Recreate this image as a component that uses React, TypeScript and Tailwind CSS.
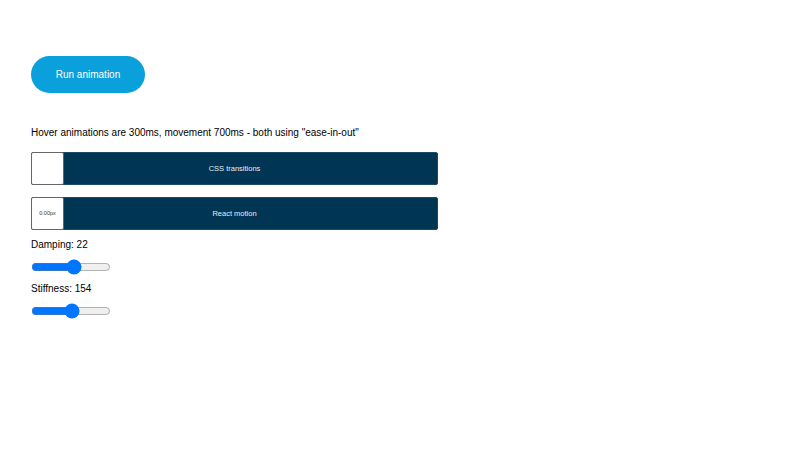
import React, { useState } from 'react';

const Bar: React.FC<{ label: string; box?: string }> = ({ label, box }) => (
  <div className="relative h-[33px] w-[407px] rounded-[2px] border border-[#1d4a66] bg-[#003554] flex items-center justify-center">
    <span className="text-[7.5px] text-[#e6eef3]">{label}</span>
    <div className="absolute left-[-1px] top-[-1px] h-[33px] w-[33px] rounded-[2px] border border-[#666] bg-white flex items-center justify-center">
      {box && <span className="text-[5.5px] text-[#333]">{box}</span>}
    </div>
  </div>
);

export default function App() {
  const [damping, setDamping] = useState(22);
  const [stiffness, setStiffness] = useState(154);

  return (
    <div
      className="min-h-screen bg-white pl-[31px] pt-[56px] text-black"
      style={{ fontFamily: '"Liberation Sans", Arial, sans-serif' }}
    >
      <button className="h-[37px] w-[114px] rounded-full bg-[#0aa0dc] text-[10px] text-white">
        Run animation
      </button>

      <p className="mt-[33px] text-[10px] leading-[14px]">
        Hover animations are 300ms, movement 700ms - both using "ease-in-out"
      </p>

      <div className="mt-[12px] flex flex-col gap-[12px]">
        <Bar label="CSS transitions" />
        <Bar label="React motion" box="0.00px" />
      </div>

      <div className="mt-[8px] text-[10px] leading-[14px]">Damping: {damping}</div>
      <input
        type="range"
        min={0}
        max={40}
        value={damping}
        onChange={(e) => setDamping(Number(e.target.value))}
        className="mt-[7px] m-0 block h-4 w-20"
      />

      <div className="mt-[7px] text-[10px] leading-[14px]">Stiffness: {stiffness}</div>
      <input
        type="range"
        min={0}
        max={300}
        value={stiffness}
        onChange={(e) => setStiffness(Number(e.target.value))}
        className="mt-[7px] m-0 block h-4 w-20"
      />
    </div>
  );
}
